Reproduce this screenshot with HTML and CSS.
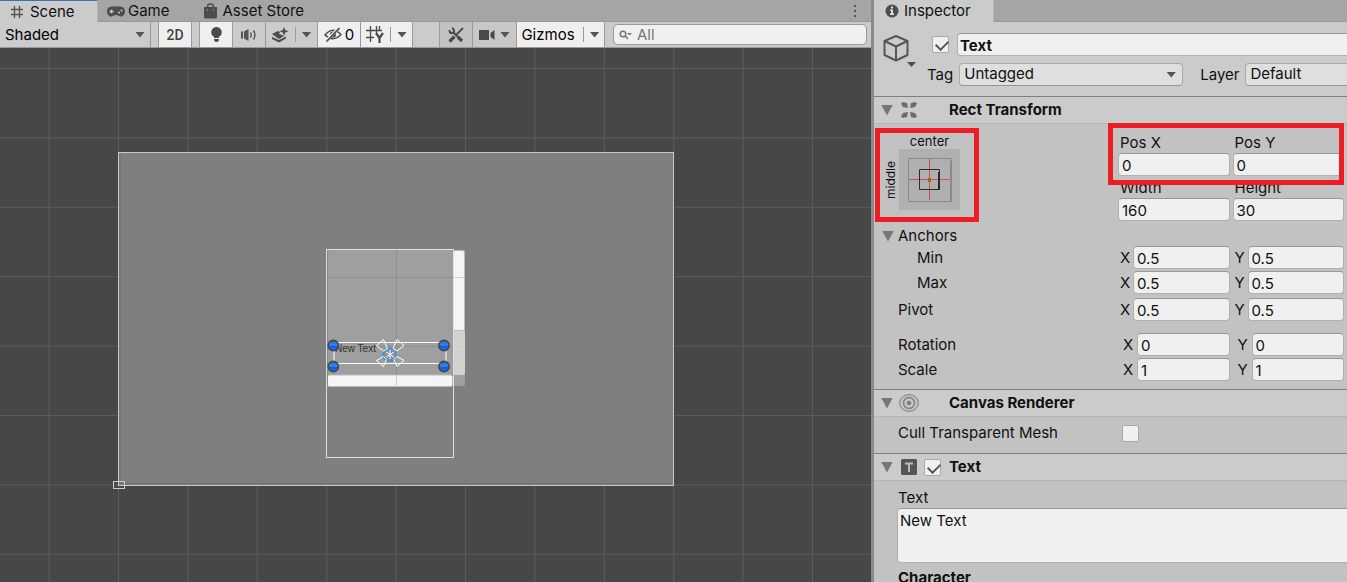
FILE: index.html
```html
<!DOCTYPE html>
<html lang="en">
<head>
<meta charset="utf-8">
<title>Scene editor</title>
<link rel="stylesheet" href="styles.css">
</head>
<body>
<div class="editor">
  <main class="scene">
    <nav class="tabs">
      <button class="tab tab-active tab-scene"><svg width="14" height="14" viewBox="0 0 14 14" fill="none" stroke="#555" stroke-width="1.4"><path d="M4.500 1v12M9.500 1v12M1 4.500h12M1 9.500h12"/></svg>Scene</button>
      <button class="tab tab-game"><svg width="18" height="11" viewBox="0 0 18 11"><path fill="#4d4d4d" d="M5 .5h8c3 0 5 2.200 5 5s-2 5-4 5c-1.800 0-2.500-1.500-5-1.500S5.800 10.500 4 10.500c-2 0-4-2.200-4-5s2-5 5-5z"/><path stroke="#ccc" stroke-width="1.300" d="M2.500 5.500h4M4.500 3.500v4"/><circle cx="12" cy="6.500" r="1" fill="#ccc"/><circle cx="14.500" cy="4.500" r="1" fill="#ccc"/></svg>Game</button>
      <button class="tab tab-store"><svg width="13" height="16" viewBox="0 0 13 16"><path fill="none" stroke="#4d4d4d" stroke-width="1.500" d="M3.500 6V3.500Q3.500 1 6.500 1t3 2.500V6"/><path fill="#4d4d4d" d="M0 4h13v10q0 1.500-1.500 1.500h-10Q0 15.500 0 14z"/><path fill="none" stroke="#999" d="M3.500 6v1.500M9.500 6v1.500"/></svg>Asset Store</button>
      <button class="more" aria-label="Tab options"><svg width="4" height="14" viewBox="0 0 4 14" fill="#555"><path d="M1 1h2v2H1zM1 6h2v2H1zM1 11h2v2H1z"/></svg></button>
    </nav>
    <div class="toolbar">
      <button class="tool shading"><span>Shaded</span><i class="arrow"></i></button>
      <span class="gap-small"></span>
      <button class="tool on mode">2D</button>
      <span class="gap-small"></span>
      <button class="tool on light" aria-label="Lighting"><svg width="11" height="16" viewBox="0 0 11 16" fill="#4a4a4a"><path d="M5.500 0a5.200 5.200 0 0 1 3.200 9.300L7.500 11h-4L2.300 9.300A5.200 5.200 0 0 1 5.500 0zM3 12h5q0 3-2.500 3T3 12z"/></svg></button>
      <button class="tool light" aria-label="Audio"><svg width="16" height="12" viewBox="0 0 16 12" fill="#555"><path d="M0 2.500h2v7H0zM3 2.500L7.500 0v12L3 9.500z"/><path fill="none" stroke="#555" stroke-width="1.400" d="M9.500 3.500q1.500 2.500 0 5M12.500 1.500q3 4.500 0 9"/></svg></button>
      <button class="tool split" aria-label="Effects"><svg width="17" height="16" viewBox="0 0 17 16" fill="#4d4d4d"><path d="M0 7l6-3 2 1-1 2 3 1 2 1-5 3zM0 10l7 3 7-3.500v2L7 15.500 0 12zM12 0l1.200 3L16.500 4.300 13.200 5.500 12 9l-1.200-3.500-3.300-1.200L10.800 3z"/></svg><i class="bar"></i><i class="arrow"></i></button>
      <button class="tool on hidden-count"><svg width="18" height="15" viewBox="0 0 18 15"><path fill="none" stroke="#4a4a4a" stroke-width="1.500" d="M1 8Q8.500-1 17 7.500 9 15.500 1 8z"/><circle cx="9" cy="7.500" r="3" fill="#4a4a4a"/><path stroke="#efefef" stroke-width="3" d="M2 14L15 1"/><path stroke="#4a4a4a" stroke-width="1.700" d="M2.500 14.500L15.500 1"/></svg>0</button>
      <button class="tool on split" aria-label="Grid"><svg width="18" height="18" viewBox="0 0 18 18" fill="none" stroke="#4a4a4a" stroke-width="1.300"><path d="M4.500 0v16M10.500 0v7M0 4.500h16M0 11.500h8M13.500 0v5"/><path stroke-width="2.200" d="M10 7l3.500 5L17 7M13.500 12v5"/></svg><i class="bar"></i><i class="arrow"></i></button>
      <span class="gap-large"></span>
      <button class="tool tools" aria-label="Component tools"><svg width="16" height="16" viewBox="0 0 16 16" stroke="#4a4a4a" fill="none"><path stroke-width="2" d="M5.500 5.500l5 5"/><path stroke-width="3.200" d="M10 10l4 4"/><path stroke-width="2" d="M1.500 3Q1.500 6.500 4 6T6 3.500 4 1"/><path stroke-width="1.800" d="M15 1L8.500 7.500"/><path stroke-width="3.200" d="M6.500 9.500L1.500 14.500"/></svg></button>
      <button class="tool camera" aria-label="Camera"><svg width="16" height="12" viewBox="0 0 16 12" fill="#4a4a4a"><path d="M0 1h10v10H0zM11.500 4L15.500 1v10l-4-3z"/></svg><i class="arrow"></i></button>
      <button class="tool on gizmos">Gizmos<i class="bar"></i><i class="arrow"></i></button>
      <label class="search"><svg width="13" height="10" viewBox="0 0 13 10"><circle cx="4" cy="4" r="2.800" fill="none" stroke="#777" stroke-width="1.500"/><path stroke="#777" stroke-width="1.600" d="M6 6l3 3"/><path fill="#777" d="M8 3h5l-2.500 2.500z"/></svg><input type="text" placeholder="All" aria-label="Search scene"></label>
    </div>
    <svg class="canvas" role="img" aria-label="Scene view">
      <defs>
        <pattern id="grid" x="118" y="20" width="69.400" height="69.400" patternUnits="userSpaceOnUse"><path d="M.5 0v69.400M0 .5h69.400" stroke="#5b5b5b" fill="none"/></pattern>
        <linearGradient id="ball" x1="0" y1="0" x2="0" y2="1"><stop offset="0" stop-color="#2c5f9e"/><stop offset=".45" stop-color="#3a86ee"/><stop offset=".6" stop-color="#0d60e0"/><stop offset="1" stop-color="#1a70f0"/></linearGradient>
      </defs>
      <rect width="100%" height="100%" fill="#474747"/>
      <rect width="100%" height="100%" fill="url(#grid)"/>
      <rect x="118.500" y="104.500" width="555" height="333" fill="#7f7f7f" stroke="#c8c8c8"/>
      <path d="M120 436V106M119 435.500H672" fill="none" stroke="#707070"/>
      <rect x="113.500" y="433.500" width="11" height="7" fill="none" stroke="#ccc"/>
      <rect x="327" y="202" width="126" height="125" rx="2" fill="#9f9f9f"/>
      <rect x="453" y="202" width="12" height="136" rx="2" fill="#9f9f9f"/>
      <rect x="453" y="282" width="12" height="45" rx="2" fill="#d2d2d2"/>
      <rect x="453.500" y="202.500" width="11" height="80" rx="2" fill="#f5f5f5" stroke="#bbb"/>
      <rect x="327.500" y="327" width="125" height="11.500" rx="2" fill="#f5f5f5" stroke="#bbb"/>
      <path d="M328 229.500h125M396.500 202v125M328 298.500h125" stroke="#8f8f8f"/>
      <path d="M454 229.500h11M396.500 328v10M454 298.500h11" stroke="#ccc"/>
      <rect x="326.500" y="201.500" width="127" height="208" fill="none" stroke="#dedede"/>
      <path d="M327.500 202v135" stroke="#888"/>
      <text class="scene-text" x="335" y="304">New Text</text>
      <circle cx="389.500" cy="306.500" r="6.500" fill="#6d8198" fill-opacity=".5" stroke="#4e8fd8" stroke-width="1.800"/>
      <rect x="334" y="294.500" width="112" height="21" fill="none" stroke="#fff"/>
      <g fill="none" stroke="#fff"><path d="M376.500 297.500l7-6 4 9-4 2.500zM404 297.500l-7-6-4 9 4 2.500zM376.500 312.500l7 6 3-7-3-3zM404 312.500l-7 6-3-7 3-3z"/><path d="M390 302v9M386 304l8 5M386 309l8-5"/></g>
      <g fill="url(#ball)" stroke="#444" stroke-width="1.400"><circle cx="333.300" cy="297.500" r="5.200"/><circle cx="444" cy="297.500" r="5.200"/><circle cx="333.300" cy="318.500" r="5.200"/><circle cx="444" cy="318.500" r="5.200"/></g>
    </svg>
  </main>

  <aside class="inspector">
    <nav class="tabs">
      <button class="tab tab-active tab-inspector"><svg width="14" height="14" viewBox="0 0 14 14"><circle cx="7" cy="7" r="6.500" fill="#4d4d4d"/><path fill="#ddd" d="M6 2.500h2v2H6zM5 5.500h3v4h1V11H5V9.500h1V7H5z"/></svg>Inspector</button>
    </nav>
    <header class="object">
      <button class="object-icon" aria-label="Object icon"><svg width="34" height="34" viewBox="0 0 34 34" fill="none" stroke="#555" stroke-width="2" stroke-linejoin="round"><path d="M13 1l11.500 5v14L13 25.500 1.500 20V6zM1.500 6L13 11.500 24.500 6M13 11.500v14"/><path d="M24 27h9l-4.500 5z" fill="#4d4d4d" stroke="none"/></svg></button>
      <div class="object-fields">
        <div class="object-name">
          <input class="check" type="checkbox" checked aria-label="Active">
          <input class="field name" type="text" value="Text" aria-label="Name">
        </div>
        <div class="object-tags">
          <label for="tag">Tag</label>
          <span class="select tag"><select id="tag"><option>Untagged</option></select><i class="arrow"></i></span>
          <label for="layer" class="layer-label">Layer</label>
          <span class="select layer"><select id="layer"><option>Default</option></select></span>
        </div>
      </div>
    </header>

    <section>
      <h2 class="component"><i class="fold"></i><svg class="component-icon" width="20" height="20" viewBox="0 0 20 20" fill="#6c6c6c"><path d="M2 3.500L4 2l4 1 1 5-5-1zM18 3.500L16 2l-4 1-1 5 5-1zM2 16.500L4 18l4-1 1-5-5 1zM18 16.500L16 18l-4-1-1-5 5 1z"/></svg><span class="component-title">Rect Transform</span></h2>
      <div class="transform">
        <div class="rect">
          <button class="anchor">
            <span class="anchor-top">center</span>
            <span class="anchor-side">middle</span>
            <svg width="61" height="61" viewBox="0 0 61 61" fill="none"><rect width="61" height="61" fill="#b0b0b0"/><path stroke="#8a8a8a" d="M9.500 9.500h43v43h-43z"/><path stroke="#8a8a8a" stroke-width="2" d="M52 12v41"/><path stroke="#c94f55" d="M30.500 10v41M10 30.500h41"/><path stroke="#2b2b2b" d="M20.500 20.500h20v20h-20z"/><path stroke="#2b2b2b" stroke-width="2" d="M40 23v18"/><path fill="#a66b00" d="M29 29h3v4h-3z"/></svg>
          </button>
          <div class="rect-fields">
            <label>Pos X<input class="field" type="text" value="0"></label>
            <label>Pos Y<input class="field" type="text" value="0"></label>
            <label>Width<input class="field" type="text" value="160"></label>
            <label>Height<input class="field" type="text" value="30"></label>
          </div>
          <div class="mark mark-anchor"></div>
          <div class="mark mark-position"></div>
        </div>
        <div class="anchors-title"><i class="fold"></i>Anchors</div>
        <div class="row child"><span>Min</span><label>X<input class="field" type="text" value="0.5"></label><label>Y<input class="field" type="text" value="0.5"></label></div>
        <div class="row child"><span>Max</span><label>X<input class="field" type="text" value="0.5"></label><label>Y<input class="field" type="text" value="0.5"></label></div>
        <div class="row pivot"><span>Pivot</span><label>X<input class="field" type="text" value="0.5"></label><label>Y<input class="field" type="text" value="0.5"></label></div>
        <div class="row wide rotation"><span>Rotation</span><label>X<input class="field" type="text" value="0"></label><label>Y<input class="field" type="text" value="0"></label></div>
        <div class="row wide"><span>Scale</span><label>X<input class="field" type="text" value="1"></label><label>Y<input class="field" type="text" value="1"></label></div>
      </div>
    </section>

    <section>
      <h2 class="component"><i class="fold"></i><svg class="component-icon" width="20" height="20" viewBox="0 0 20 20" fill="none" stroke="#888"><ellipse cx="10" cy="10" rx="9.200" ry="8.300" stroke-width="1.200"/><circle cx="10" cy="10" r="5.500" stroke-width="1.800"/><circle cx="10" cy="10" r="2" fill="#777"/></svg><span class="component-title">Canvas Renderer</span></h2>
      <div class="cull"><label for="cull">Cull Transparent Mesh</label><input id="cull" class="check" type="checkbox"></div>
    </section>

    <section>
      <h2 class="component"><i class="fold"></i><svg class="component-icon" width="20" height="20" viewBox="0 0 20 20"><rect x="2" y="2" width="16" height="16" rx="1.500" fill="#555"/><path stroke="#bbb" stroke-width="2" d="M6 6.500h8M10 6v9"/></svg><input class="check" type="checkbox" checked aria-label="Text enabled"><span class="component-title">Text</span></h2>
      <div class="text-body">
        <label for="content">Text</label>
        <textarea id="content" class="field">New Text</textarea>
        <h3>Character</h3>
      </div>
    </section>
  </aside>
</div>
</body>
</html>
```
FILE: styles.css
```css
* { box-sizing: border-box; }

body {
  margin: 0;
  font: 15px/20px Inter, "Liberation Sans", sans-serif;
  color: #111;
  background: #c2c2c2;
}

button, input, select, textarea { font: inherit; color: inherit; margin: 0; }
button { border: 0; padding: 0; background: none; text-align: left; }
svg { flex: none; display: block; }

.editor {
  display: grid;
  grid-template-columns: minmax(0, 1fr) 476px;
  height: 100vh;
  overflow: hidden;
}

.scene { display: flex; flex-direction: column; min-width: 0; }

/* Tabs */
.tabs {
  display: flex;
  height: 22px;
  background: #a5a5a5;
  border-bottom: 1px solid #999;
}
.tab { display: flex; align-items: center; height: 22px; gap: 6px; white-space: nowrap; }
.tab-active { background: #cbcbcb; border-right: 1px solid #b5b5b5; }
.tab-scene { width: 98px; padding-left: 10px; border-top: 1px solid #3a72b0; }
.tab-game { padding-left: 9px; gap: 3px; }
.tab-store { padding-left: 34px; }
.tab-inspector { width: 120px; padding-left: 11px; gap: 5px; }
.more { margin-left: auto; padding: 2px 14px; }

/* Toolbar */
.toolbar {
  display: flex;
  height: 26px;
  background: #cbcbcb;
  border-bottom: 1px solid #999;
}
.tool, .gap-small, .gap-large { flex: none; border-right: 1px solid #999; }
.tool {
  display: flex;
  align-items: center;
  justify-content: center;
  color: #000;
}
.on { background: #efefef; }
.arrow {
  flex: none;
  width: 10px;
  height: 6px;
  background: #555;
  clip-path: polygon(0 0, 100% 0, 50% 100%);
}
.bar { width: 1px; height: 15px; background: #999; }
.shading { width: 151px; padding: 0 5px; justify-content: space-between; }
.gap-small { width: 8px; }
.gap-large { width: 27px; }
.mode { width: 33px; font: 500 14px/20px Roboto, sans-serif; color: #444; }
.light { width: 33px; }
.split { width: 52px; gap: 6px; }
.hidden-count { width: 43px; gap: 3px; }
.tools { width: 33px; background: #c2c2c2; }
.camera { width: 44px; gap: 5px; background: #c8c8c8; }
.gizmos { width: 88px; gap: 6px; }
.gizmos .bar { margin-left: 2px; }
.search {
  display: flex;
  align-items: center;
  flex: 1;
  min-width: 0;
  gap: 5px;
  margin: 2px 4px 2px 8px;
  padding-left: 5px;
  background: #f0f0f0;
  border: 1px solid #999;
  border-radius: 5px;
}
.search input { flex: 1; min-width: 0; padding: 0; border: 0; background: none; }
.search input::placeholder { color: #777; }

.canvas { flex: 1; width: 100%; min-height: 0; }
.scene-text { font: 10px "Liberation Sans", sans-serif; fill: #333; }

/* Inspector */
.inspector {
  border-left: 3px solid #8a8a8a;
  background: #c2c2c2;
  overflow: hidden;
}
.field {
  display: block;
  width: 100%;
  height: 23px;
  padding: 1px 3px 0;
  background: #f0f0f0;
  border: 1px solid #b0b0b0;
  border-top-color: #989898;
  border-radius: 4px;
}
.check {
  appearance: none;
  flex: none;
  width: 17px;
  height: 17px;
  background: #f0f0f0;
  border: 1px solid #a8a8a8;
  border-radius: 2px;
}
.check:checked::before {
  content: "";
  display: block;
  width: 10px;
  height: 6px;
  margin: 3px;
  border: solid #555;
  border-width: 0 0 2px 2px;
  transform: rotate(-45deg);
}

.object { display: flex; height: 74px; background: #cbcbcb; padding: 11px 0 0 9px; }
.object-icon { align-self: flex-start; padding-top: 2px; }
.object-fields { flex: 1; }
.object-name { display: flex; align-items: center; gap: 8px; padding-left: 15px; }
.object-name .name {
  flex: 1;
  font-weight: 700;
  padding-left: 2px;
  border-right: 0;
  border-radius: 4px 0 0 4px;
}
.object-tags { display: flex; align-items: center; gap: 6px; padding: 7px 0 0 10px; }
.select { display: flex; align-items: center; position: relative; }
.select select {
  appearance: none;
  width: 100%;
  height: 23px;
  padding: 0 4px 2px;
  background: #dfdfdf;
  border: 1px solid #aaa;
  border-bottom-color: #969696;
  border-radius: 4px;
}
.select .arrow { position: absolute; right: 7px; }
.tag { width: 224px; }
.layer { flex: 1; }
.layer select { border-right: 0; border-radius: 4px 0 0 4px; }
.layer-label { padding-left: 11px; }

.component {
  display: flex;
  align-items: center;
  height: 28px;
  margin: 0;
  padding-left: 7px;
  font-size: 15px;
  font-weight: 700;
  background: #cbcbcb;
  border-top: 1px solid #7f7f7f;
  border-bottom: 1px solid #b5b5b5;
}
.fold {
  flex: none;
  width: 12px;
  height: 11px;
  background: #777;
  clip-path: polygon(0 0, 100% 0, 50% 100%);
}
.component-icon { margin-left: 6px; }
.component-title { margin-left: 30px; }
.component .check { margin-left: 5px; }
.component .check + .component-title { margin-left: 8px; }

.transform { padding: 9px 3px 6px 0; }
.rect { display: flex; position: relative; }
.anchor {
  display: grid;
  grid-template-columns: 17px 61px;
  grid-template-rows: 16px 61px;
  width: 244px;
  padding-left: 8px;
  align-content: start;
  font-size: 13px;
  line-height: 16px;
  text-align: center;
}
.anchor-top { grid-column: 2; }
.anchor-side { font-size: 12px; line-height: 14px; justify-self: center; writing-mode: vertical-rl; transform: rotate(180deg); }
.rect-fields {
  flex: 1;
  display: grid;
  grid-template-columns: 1fr 1fr;
  column-gap: 3px;
  row-gap: 2px;
}
.rect-fields label { padding-left: 2px; }
.rect-fields .field { margin-left: -2px; width: calc(100% + 2px); }
.mark { position: absolute; border: 5px solid #ee1c25; pointer-events: none; }
.mark-anchor { left: 1px; top: -5px; width: 104px; height: 94px; }
.mark-position { left: 234px; right: 0; top: -10px; height: 62px; }

.anchors-title { display: flex; align-items: center; gap: 4px; padding: 5px 0 0 8px; height: 25px; }
.row {
  display: grid;
  grid-template-columns: 217px 1fr 1fr;
  column-gap: 3px;
  padding-left: 24px;
  margin-bottom: 2px;
  align-items: center;
}
.row label { display: grid; grid-template-columns: 13px 1fr; padding-left: 2px; align-items: center; }
.child span { padding-left: 19px; }
.pivot { margin-top: 4px; }
.rotation { margin-top: 12px; }
.wide label { grid-template-columns: 14px 1fr; padding-left: 5px; }

.cull { display: grid; grid-template-columns: 224px 1fr; align-items: center; height: 36px; padding: 0 0 4px 24px; }
.text-body { padding: 7px 0 0 23px; }
.text-body label { display: block; padding-left: 1px; }
textarea.field {
  height: 55px;
  padding: 2px;
  resize: none;
  border-right: 0;
  border-radius: 4px 0 0 4px;
}
.text-body h3 { margin: 5px 0 0 1px; font-size: 15px; font-weight: 700; white-space: nowrap; }
```
